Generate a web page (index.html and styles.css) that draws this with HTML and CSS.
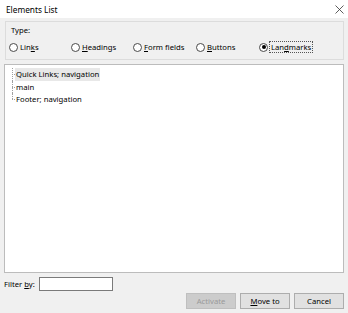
FILE: index.html
```html
<!DOCTYPE html>
<html>
<head>
<meta charset="utf-8">
<link rel="stylesheet" href="styles.css">
</head>
<body>
<div class="dialog">
  <div class="titlebar">
    <span class="title">Elements List</span>
    <svg class="close" width="9" height="9" viewBox="0 0 9 9"><path d="M0.5 0.5 L8.5 8.5 M8.5 0.5 L0.5 8.5" stroke="#333" stroke-width="0.8" fill="none"/></svg>
  </div>
  <div class="content">
    <div class="group">
      <div class="group-label">Type:</div>
      <div class="radios">
        <label class="radio r-links"><span class="dot"></span><span>Lin<u>k</u>s</span></label>
        <label class="radio r-headings"><span class="dot"></span><span><u>H</u>eadings</span></label>
        <label class="radio r-form"><span class="dot"></span><span><u>F</u>orm fields</span></label>
        <label class="radio r-buttons"><span class="dot"></span><span><u>B</u>uttons</span></label>
        <label class="radio r-landmarks"><span class="dot checked"></span><span class="focus">Lan<u>d</u>marks</span></label>
      </div>
    </div>
    <div class="listbox">
      <div class="tree">
        <div class="item selected">Quick Links; navigation</div>
        <div class="item">main</div>
        <div class="item last">Footer; navigation</div>
      </div>
    </div>
    <div class="filter">
      <span class="filter-label">Filter <u>b</u>y:</span>
      <span class="input"></span>
    </div>
    <div class="buttons">
      <span class="btn disabled">Activate</span>
      <span class="btn"><u>M</u>ove to</span>
      <span class="btn">Cancel</span>
    </div>
  </div>
</div>
</body>
</html>
```

FILE: styles.css
```css
html, body {
  margin: 0;
  padding: 0;
}
body {
  width: 348px;
  height: 313px;
  background: #f0f0f0;
  font-family: "Noto Sans", "Open Sans", sans-serif;
  font-size: 7.7px;
  color: #000;
  overflow: hidden;
}
.dialog {
  width: 348px;
  height: 313px;
  display: flex;
  flex-direction: column;
}
.titlebar {
  height: 18px;
  background: #fff;
  display: flex;
  align-items: center;
  justify-content: space-between;
  padding: 0 6px 0 6px;
  font-size: 8.3px;
}
.close {
  display: block;
  margin-right: -2px;
}
.content {
  flex: 1;
  display: flex;
  flex-direction: column;
  padding: 3px 4px 4px 4px;
}
.group {
  border: 1px solid #dcdcdc;
  margin: 0 0 0 1px;
  height: 39px;
  box-sizing: border-box;
  padding: 3px 0 0 5px;
}
.group-label {
  line-height: 11px;
}
.radios {
  display: flex;
  align-items: center;
  margin: 5px 0 0 -2px;
  height: 12px;
}
.radio {
  display: flex;
  align-items: center;
  gap: 2px;
}
.r-links { width: 62px; }
.r-headings { width: 62px; }
.r-form { width: 63px; }
.r-buttons { width: 63px; }
.dot {
  width: 9px;
  height: 9px;
  border: 1px solid #4a4a4a;
  border-radius: 50%;
  box-sizing: border-box;
  background: #fff;
  display: flex;
  align-items: center;
  justify-content: center;
}
.dot.checked::after {
  content: "";
  width: 4px;
  height: 4px;
  border-radius: 50%;
  background: #000;
}
.focus {
  outline: 1px dotted #555;
  outline-offset: 0;
  padding: 0 1px;
}
.listbox {
  margin-top: 4px;
  height: 209px;
  background: #fff;
  border: 1px solid #bcbcbc;
  box-sizing: border-box;
  padding: 3px 0 0 7px;
}
.tree {
  display: flex;
  flex-direction: column;
  align-items: flex-start;
}
.item {
  position: relative;
  line-height: 12.5px;
  padding: 0 1px 0 1px;
  margin-left: 3px;
  white-space: nowrap;
}
.item::before {
  content: "";
  position: absolute;
  left: -3px;
  top: 0;
  height: 100%;
  border-left: 1px dotted #a0a0a0;
}
.item.last::before {
  height: 50%;
}
.item::after {
  content: "";
  position: absolute;
  left: -3px;
  top: 50%;
  width: 3px;
  border-top: 1px dotted #a0a0a0;
}
.item.selected {
  background: #e8e8e8;
}
.filter {
  display: flex;
  align-items: center;
  margin-top: 4px;
  height: 14px;
  gap: 4px;
}
.input {
  width: 74px;
  height: 14px;
  box-sizing: border-box;
  background: #fff;
  border: 1px solid #7a7a7a;
}
.buttons {
  display: flex;
  justify-content: flex-end;
  gap: 4px;
  margin-top: auto;
}
.btn {
  width: 50px;
  height: 16px;
  box-sizing: border-box;
  border: 1px solid #adadad;
  background: #e1e1e1;
  display: flex;
  align-items: center;
  justify-content: center;
}
.btn.disabled {
  background: #cccccc;
  border-color: #bfbfbf;
  color: #9a9a9a;
}
```
